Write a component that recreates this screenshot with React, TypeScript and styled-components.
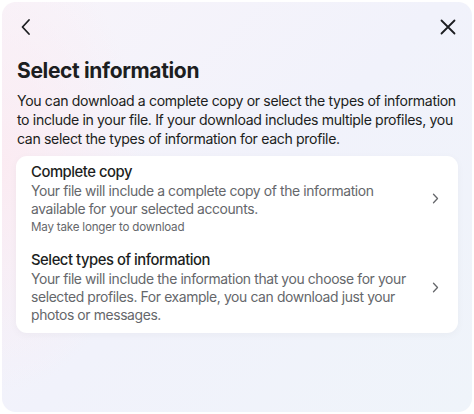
import React from "react";
import styled, { createGlobalStyle } from "styled-components";

const Global = createGlobalStyle`
  html, body {
    margin: 0;
    padding: 0;
    background: #fff;
  }
  body {
    font-family: Inter, "Noto Sans", sans-serif;
    color: #1c1e21;
    -webkit-font-smoothing: antialiased;
  }
`;

const Panel = styled.div`
  box-sizing: border-box;
  width: 470px;
  height: 410px;
  margin: 2px;
  border-radius: 14px;
  padding: 11px 14px 0 14px;
  background:
    radial-gradient(ellipse 30% 55% at 0% 40%, rgba(252, 234, 241, 0.85) 0, rgba(252, 234, 241, 0) 100%),
    linear-gradient(135deg, #f8f4fa 0%, #f1f2fb 50%, #eff4fa 100%);
`;

const TopBar = styled.div`
  display: flex;
  justify-content: space-between;
  align-items: center;
  height: 28px;
  margin: 0 -2px 0 -2px;
`;

const IconButton = styled.button`
  border: 0;
  background: none;
  padding: 0;
  width: 24px;
  height: 24px;
  display: flex;
  align-items: center;
  justify-content: center;
  color: #1c1e21;
`;

const Title = styled.h1`
  margin: 16px 0 0 1px;
  font-size: 21px;
  line-height: 28px;
  font-weight: 700;
  letter-spacing: -0.35px;
`;

const Description = styled.p`
  margin: 6px -12px 0 1px;
  font-size: 14.1px;
  line-height: 19px;
  letter-spacing: -0.35px;
  color: #1c1e21;
`;

const Card = styled.div`
  margin-top: 8px;
  background: #fff;
  border-radius: 11px;
  box-shadow: 0 2px 8px rgba(0, 0, 0, 0.035);
  padding: 6px 0 9px;
`;

const Row = styled.div`
  display: flex;
  align-items: center;
  padding: 0 18px 0 15px;
  & + & {
    margin-top: 15px;
  }
`;

const RowText = styled.div`
  flex: 1;
`;

const RowTitle = styled.div`
  font-size: 14.8px;
  line-height: 20px;
  font-weight: 500;
  letter-spacing: -0.45px;
  color: #1c1e21;
`;

const RowBody = styled.div`
  font-size: 13.9px;
  line-height: 18px;
  letter-spacing: -0.38px;
  color: #65676b;
`;

const RowNote = styled.div`
  margin-top: 1px;
  font-size: 11.6px;
  line-height: 16px;
  letter-spacing: -0.2px;
  color: #65676b;
`;

const Chevron = styled.div`
  width: 10px;
  display: flex;
  justify-content: center;
  margin-left: 16px;
  color: #65676b;
`;

const ChevronRight = () => (
  <svg width="7" height="11" viewBox="0 0 7 11" fill="none">
    <path d="M1.5 1.2L5.5 5.5L1.5 9.8" stroke="currentColor" strokeWidth="1.3" strokeLinecap="round" strokeLinejoin="round" />
  </svg>
);

const options = [
  {
    title: "Complete copy",
    body: "Your file will include a complete copy of the information available for your selected accounts.",
    note: "May take longer to download",
  },
  {
    title: "Select types of information",
    body: "Your file will include the information that you choose for your selected profiles. For example, you can download just your photos or messages.",
  },
];

export default function App() {
  return (
    <>
      <Global />
      <Panel>
        <TopBar>
          <IconButton aria-label="Back">
            <svg width="14" height="18" viewBox="0 0 14 18" fill="none">
              <path d="M10 2L3.5 9L10 16" stroke="currentColor" strokeWidth="1.8" strokeLinecap="round" strokeLinejoin="round" />
            </svg>
          </IconButton>
          <IconButton aria-label="Close">
            <svg width="16" height="16" viewBox="0 0 16 16" fill="none">
              <path d="M1.5 1.5L14.5 14.5M14.5 1.5L1.5 14.5" stroke="currentColor" strokeWidth="1.8" strokeLinecap="round" />
            </svg>
          </IconButton>
        </TopBar>
        <Title>Select information</Title>
        <Description>
          You can download a complete copy or select the types of information to include in your file. If your download includes multiple profiles, you can select the types of information for each profile.
        </Description>
        <Card>
          {options.map((o) => (
            <Row key={o.title}>
              <RowText>
                <RowTitle>{o.title}</RowTitle>
                <RowBody>{o.body}</RowBody>
                {o.note && <RowNote>{o.note}</RowNote>}
              </RowText>
              <Chevron>
                <ChevronRight />
              </Chevron>
            </Row>
          ))}
        </Card>
      </Panel>
    </>
  );
}
